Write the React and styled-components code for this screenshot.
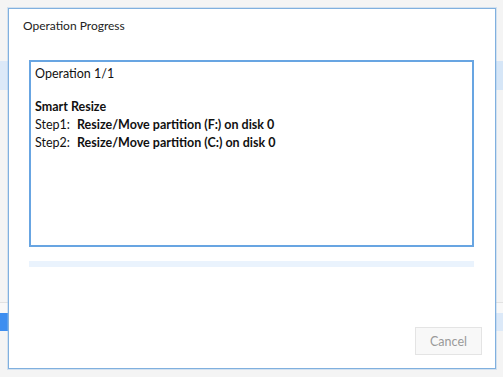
import React from "react";
import styled, { createGlobalStyle } from "styled-components";

const GlobalStyle = createGlobalStyle`
  html, body {
    margin: 0;
    padding: 0;
    width: 503px;
    height: 377px;
    overflow: hidden;
    background: #f4f4f4;
    font-family: Lato, "Open Sans", sans-serif;
  }
`;

// app behind the dialog, only its edges show
const Backdrop = styled.div`
  width: 503px;
  height: 377px;
  display: flex;
  flex-direction: column;
`;

const Stripe = styled.div`
  height: ${(p) => p.h}px;
  flex-shrink: 0;
  display: flex;
  background: ${(p) => p.bg || "#f4f4f4"};
  border-top: ${(p) => (p.line ? "1px solid #e2e2e2" : "none")};
`;

const StripeSide = styled.div`
  width: ${(p) => p.w}px;
  background: ${(p) => p.bg};
`;

const StripeRest = styled.div`
  flex: 1;
  background: ${(p) => p.bg};
`;

const Dialog = styled.div`
  position: absolute;
  left: 8px;
  top: 8px;
  width: 445px;
  height: 359px;
  background: #fff;
  border: 1px solid #80b0df;
  box-shadow: 0 0 0 1px rgba(150, 190, 230, 0.35);
  display: flex;
  flex-direction: column;
  padding: 0 21px 0 20px;
`;

const Title = styled.div`
  height: 30px;
  margin-left: -6px;
  display: flex;
  align-items: center;
  font-size: 12px;
  color: #222;
  margin-top: 1px;
  margin-bottom: 20px;
`;

const LogBox = styled.div`
  box-sizing: border-box;
  height: 187px;
  border: 2px solid #68a5e2;
  padding: 3px 4px;
  font-size: 12.5px;
  line-height: 18px;
  color: #111;
`;

const Line = styled.div`
  min-height: ${(p) => (p.gap ? 15 : 18)}px;
  font-weight: ${(p) => (p.bold ? 700 : 400)};
`;

const StepLabel = styled.span`
  display: inline-block;
  width: 42px;
`;

const StepText = styled.span`
  font-weight: 700;
`;

const ProgressTrack = styled.div`
  margin-top: 14px;
  height: 6px;
  background: #eaf3fd;
`;

const Footer = styled.div`
  flex: 1;
  display: flex;
  justify-content: flex-end;
  align-items: flex-end;
  padding-bottom: 13px;
  margin-right: -8px;
`;

const Button = styled.button`
  width: 67px;
  height: 28px;
  background: #f8f8f8;
  border: 1px solid #e4e4e4;
  color: #9a9a9a;
  font-family: inherit;
  font-size: 12.5px;
  padding: 0;
`;

const steps = [
  "Resize/Move partition (F:) on disk 0",
  "Resize/Move partition (C:) on disk 0",
];

export default function App() {
  return (
    <>
      <GlobalStyle />
      <Backdrop>
        <Stripe h={61} />
        <Stripe h={29}>
          <StripeSide w={8} bg="#dce9f8" />
          <StripeRest bg="#f4f4f4" />
          <StripeSide w={8} bg="#d6e6f7" />
        </Stripe>
        <Stripe h={212} />
        <Stripe h={10} line bg="#f8f8f8" />
        <Stripe h={18}>
          <StripeSide w={8} bg="#3d8ef0" />
          <StripeRest bg="#f8f8f8" />
          <StripeSide w={8} bg="#dce9f8" />
        </Stripe>
        <Stripe h={47} />
      </Backdrop>
      <Dialog>
        <Title>Operation Progress</Title>
        <LogBox>
          <Line>Operation 1/1</Line>
          <Line gap />
          <Line bold>Smart Resize</Line>
          {steps.map((s, i) => (
            <Line key={i}>
              <StepLabel>Step{i + 1}:</StepLabel>
              <StepText>{s}</StepText>
            </Line>
          ))}
        </LogBox>
        <ProgressTrack />
        <Footer>
          <Button>Cancel</Button>
        </Footer>
      </Dialog>
    </>
  );
}
